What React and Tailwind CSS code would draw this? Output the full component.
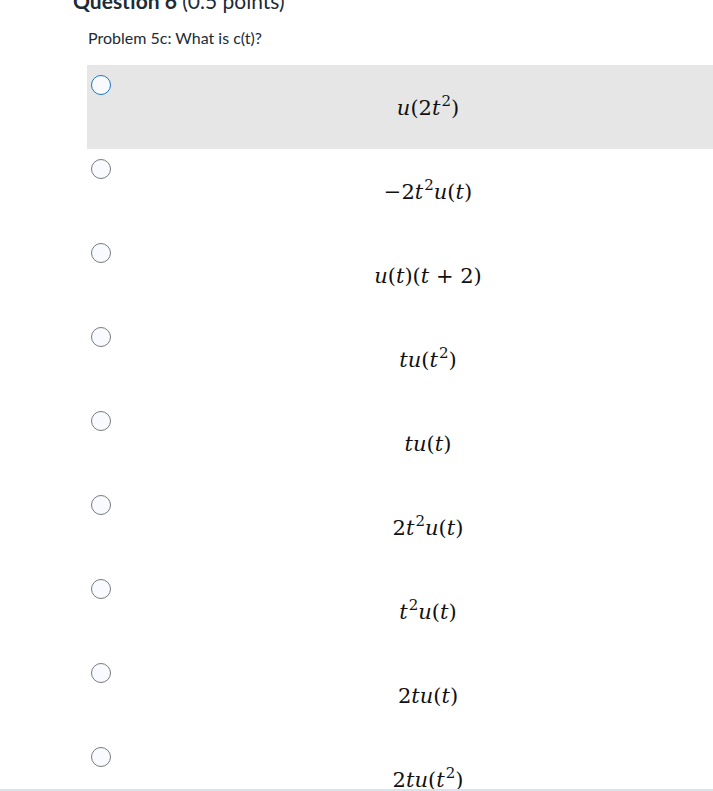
import React from 'react';

const V = ({ children }) => <span className="italic">{children}</span>;
const Sup = ({ children }) => (
  <span className="inline-block not-italic text-[15px] leading-none align-[9px] ml-[1px]">{children}</span>
);

// answer choices, written as small math fragments
const choices = [
  <><V>u</V>(2<V>t</V><Sup>2</Sup>)</>,
  <>−2<V>t</V><Sup>2</Sup><V>u</V>(<V>t</V>)</>,
  <><V>u</V>(<V>t</V>)(<V>t</V> + 2)</>,
  <><V>t</V><V>u</V>(<V>t</V><Sup>2</Sup>)</>,
  <><V>t</V><V>u</V>(<V>t</V>)</>,
  <>2<V>t</V><Sup>2</Sup><V>u</V>(<V>t</V>)</>,
  <><V>t</V><Sup>2</Sup><V>u</V>(<V>t</V>)</>,
  <>2<V>t</V><V>u</V>(<V>t</V>)</>,
  <>2<V>t</V><V>u</V>(<V>t</V><Sup>2</Sup>)</>,
];

const App = () => {
  const selected = 0;

  return (
    <div className="w-[713px] h-[791px] overflow-hidden bg-white relative font-['Lato','Open_Sans',sans-serif] text-[#202b36]">
      <div className="pl-[73px] -mt-[12px] text-[21px] leading-[26px]">
        <span className="font-bold">Question 6</span> <span>(0.5 points)</span>
      </div>

      <p className="pl-[88px] mt-[14px] text-[16px] leading-[20px]">Problem 5c: What is c(t)?</p>

      {/* Choices */}
      <div className="mt-[17px] ml-[87px]">
        {choices.map((math, i) => (
          <div
            key={i}
            className={`flex h-[84px] ${i === selected ? 'bg-[#e6e6e6]' : ''}`}
          >
            <div className="pt-[10px] pl-[4px]">
              <div
                className={`w-[20px] h-[20px] rounded-full bg-[#f8faff] border ${
                  i === selected ? 'border-[#1c76c8] border-[1.5px]' : 'border-[#777a7e]'
                }`}
              />
            </div>
            <div className="flex-1 pl-[32px] pt-[28px] text-center font-['DejaVu_Serif','Liberation_Serif',serif] text-[21px] leading-[30px] text-[#111]">
              {math}
            </div>
          </div>
        ))}
      </div>

      <div className="absolute left-0 right-0 bottom-0 h-[2px] bg-[#d3e5ee]" />
    </div>
  );
};

export default App;
